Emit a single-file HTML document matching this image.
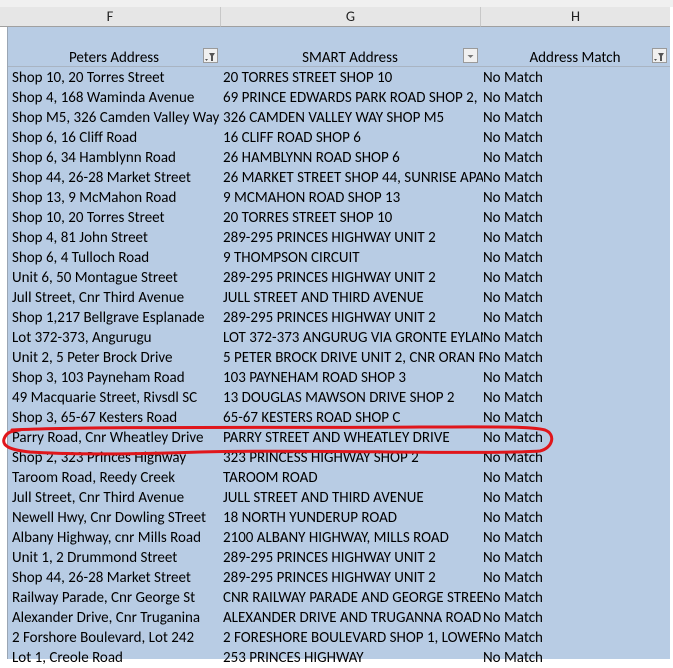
<!DOCTYPE html>
<html><head><style>
body{margin:0;width:673px;height:659px;overflow:hidden;background:#fff;position:relative;font-family:Calibri,Carlito,"Liberation Sans",sans-serif;}
.top{position:absolute;left:0;top:0;width:673px;height:7px;background:#f0f0f0;}
.hdr{position:absolute;top:7px;height:19px;background:#e6e6e6;border-bottom:1px solid #a0a0a0;font-size:14.5px;color:#222;text-align:center;line-height:19px;}
.blue{position:absolute;left:8px;top:27px;width:662px;height:632px;background:#b8cce4;}
.lgrid{position:absolute;left:7px;top:27px;width:1px;height:632px;background:#9aa6b4;}
.row{position:absolute;left:8px;height:20px;width:662px;font-size:15px;line-height:20px;color:#000;}
.row span{position:absolute;top:1px;white-space:nowrap;overflow:hidden;}
.a{left:4px;width:208px}.b{left:215px;width:260px}.c{left:475px;width:180px}
.fb{position:absolute;top:48px;width:15px;height:15px;background:#f0f0f0;border:1px solid #9a9a9a;box-sizing:border-box;}
</style></head><body>
<div class="top"></div>
<div class="hdr" style="left:0;width:220px;border-right:1px solid #c8c8c8">F</div>
<div class="hdr" style="left:221px;width:259px;border-right:1px solid #c8c8c8">G</div>
<div class="hdr" style="left:481px;width:189px;">H</div>
<div class="blue"></div>
<div class="lgrid"></div>
<div style="position:absolute;left:8px;top:66px;width:662px;height:1px;background:#a9b4c2"></div>
<div class="row" style="top:47px;text-align:center">
<span style="left:0;width:212px">Peters Address</span>
<span style="left:212px;width:260px">SMART Address</span>
<span style="left:472px;width:190px">Address Match</span>
</div>
<div class="fb" style="left:203px"><svg width="13" height="13" viewBox="0 0 13 13"><path d="M5 3h6l-2 3v5h-2v-5z" fill="#555"/><path d="M1 9h3l-1.5 2z" fill="#555"/></svg></div>
<div class="fb" style="left:463px"><svg width="13" height="13" viewBox="0 0 13 13"><path d="M3.5 5h6l-3 3z" fill="#777"/></svg></div>
<div class="fb" style="left:652px"><svg width="13" height="13" viewBox="0 0 13 13"><path d="M5 3h6l-2 3v5h-2v-5z" fill="#555"/><path d="M1 9h3l-1.5 2z" fill="#555"/></svg></div>
<div style="position:absolute;left:670px;top:27px;width:3px;height:632px;background:#fff"></div>

<div class="row" style="top:67px"><span class="a">Shop 10, 20 Torres Street</span><span class="b">20 TORRES STREET SHOP 10</span><span class="c">No Match</span></div>
<div class="row" style="top:87px"><span class="a">Shop 4, 168 Waminda Avenue</span><span class="b">69 PRINCE EDWARDS PARK ROAD SHOP 2,</span><span class="c">No Match</span></div>
<div class="row" style="top:107px"><span class="a">Shop M5, 326 Camden Valley Way</span><span class="b">326 CAMDEN VALLEY WAY SHOP M5</span><span class="c">No Match</span></div>
<div class="row" style="top:127px"><span class="a">Shop 6, 16 Cliff Road</span><span class="b">16 CLIFF ROAD SHOP 6</span><span class="c">No Match</span></div>
<div class="row" style="top:147px"><span class="a">Shop 6, 34 Hamblynn Road</span><span class="b">26 HAMBLYNN ROAD SHOP 6</span><span class="c">No Match</span></div>
<div class="row" style="top:167px"><span class="a">Shop 44, 26-28 Market Street</span><span class="b">26 MARKET STREET SHOP 44, SUNRISE APA</span><span class="c">No Match</span></div>
<div class="row" style="top:187px"><span class="a">Shop 13, 9 McMahon Road</span><span class="b">9 MCMAHON ROAD SHOP 13</span><span class="c">No Match</span></div>
<div class="row" style="top:207px"><span class="a">Shop 10, 20 Torres Street</span><span class="b">20 TORRES STREET SHOP 10</span><span class="c">No Match</span></div>
<div class="row" style="top:227px"><span class="a">Shop 4, 81 John Street</span><span class="b">289-295 PRINCES HIGHWAY UNIT 2</span><span class="c">No Match</span></div>
<div class="row" style="top:247px"><span class="a">Shop 6, 4 Tulloch Road</span><span class="b">9 THOMPSON CIRCUIT</span><span class="c">No Match</span></div>
<div class="row" style="top:267px"><span class="a">Unit 6, 50 Montague Street</span><span class="b">289-295 PRINCES HIGHWAY UNIT 2</span><span class="c">No Match</span></div>
<div class="row" style="top:287px"><span class="a">Jull Street, Cnr Third Avenue</span><span class="b">JULL STREET AND THIRD AVENUE</span><span class="c">No Match</span></div>
<div class="row" style="top:307px"><span class="a">Shop 1,217 Bellgrave Esplanade</span><span class="b">289-295 PRINCES HIGHWAY UNIT 2</span><span class="c">No Match</span></div>
<div class="row" style="top:327px"><span class="a">Lot 372-373, Angurugu</span><span class="b">LOT 372-373 ANGURUG VIA GRONTE EYLAND</span><span class="c">No Match</span></div>
<div class="row" style="top:347px"><span class="a">Unit 2, 5 Peter Brock Drive</span><span class="b">5 PETER BROCK DRIVE UNIT 2, CNR ORAN PARK</span><span class="c">No Match</span></div>
<div class="row" style="top:367px"><span class="a">Shop 3, 103 Payneham Road</span><span class="b">103 PAYNEHAM ROAD SHOP 3</span><span class="c">No Match</span></div>
<div class="row" style="top:387px"><span class="a">49 Macquarie Street, Rivsdl SC</span><span class="b">13 DOUGLAS MAWSON DRIVE SHOP 2</span><span class="c">No Match</span></div>
<div class="row" style="top:407px"><span class="a">Shop 3, 65-67 Kesters Road</span><span class="b">65-67 KESTERS ROAD SHOP C</span><span class="c">No Match</span></div>
<div class="row" style="top:427px"><span class="a">Parry Road, Cnr Wheatley Drive</span><span class="b">PARRY STREET AND WHEATLEY DRIVE</span><span class="c">No Match</span></div>
<div class="row" style="top:447px"><span class="a">Shop 2, 323 Princes Highway</span><span class="b">323 PRINCESS HIGHWAY SHOP 2</span><span class="c">No Match</span></div>
<div class="row" style="top:467px"><span class="a">Taroom Road, Reedy Creek</span><span class="b">TAROOM ROAD</span><span class="c">No Match</span></div>
<div class="row" style="top:487px"><span class="a">Jull Street, Cnr Third Avenue</span><span class="b">JULL STREET AND THIRD AVENUE</span><span class="c">No Match</span></div>
<div class="row" style="top:507px"><span class="a">Newell Hwy, Cnr Dowling STreet</span><span class="b">18 NORTH YUNDERUP ROAD</span><span class="c">No Match</span></div>
<div class="row" style="top:527px"><span class="a">Albany Highway, cnr Mills Road</span><span class="b">2100 ALBANY HIGHWAY, MILLS ROAD</span><span class="c">No Match</span></div>
<div class="row" style="top:547px"><span class="a">Unit 1, 2 Drummond Street</span><span class="b">289-295 PRINCES HIGHWAY UNIT 2</span><span class="c">No Match</span></div>
<div class="row" style="top:567px"><span class="a">Shop 44, 26-28 Market Street</span><span class="b">289-295 PRINCES HIGHWAY UNIT 2</span><span class="c">No Match</span></div>
<div class="row" style="top:587px"><span class="a">Railway Parade, Cnr George St</span><span class="b">CNR RAILWAY PARADE AND GEORGE STREET</span><span class="c">No Match</span></div>
<div class="row" style="top:607px"><span class="a">Alexander Drive, Cnr Truganina</span><span class="b">ALEXANDER DRIVE AND TRUGANNA ROAD</span><span class="c">No Match</span></div>
<div class="row" style="top:627px"><span class="a">2 Forshore Boulevard, Lot 242</span><span class="b">2 FORESHORE BOULEVARD SHOP 1, LOWER</span><span class="c">No Match</span></div>
<div class="row" style="top:647px"><span class="a">Lot 1, Creole Road</span><span class="b">253 PRINCES HIGHWAY</span><span class="c">No Match</span></div>

<svg style="position:absolute;left:0;top:420px" width="560" height="40" viewBox="0 420 560 40">
<path d="M12 430 C100 426 300 428 420 427 C480 427 530 426 545 430 C556 434 553 448 540 451 C480 455 300 449 200 452 C120 455 60 454 30 452 C10 450 2 446 4 439 C6 433 10 431 20 430" fill="none" stroke="#e0161b" stroke-width="3" stroke-linecap="round"/>
</svg>
</body></html>
